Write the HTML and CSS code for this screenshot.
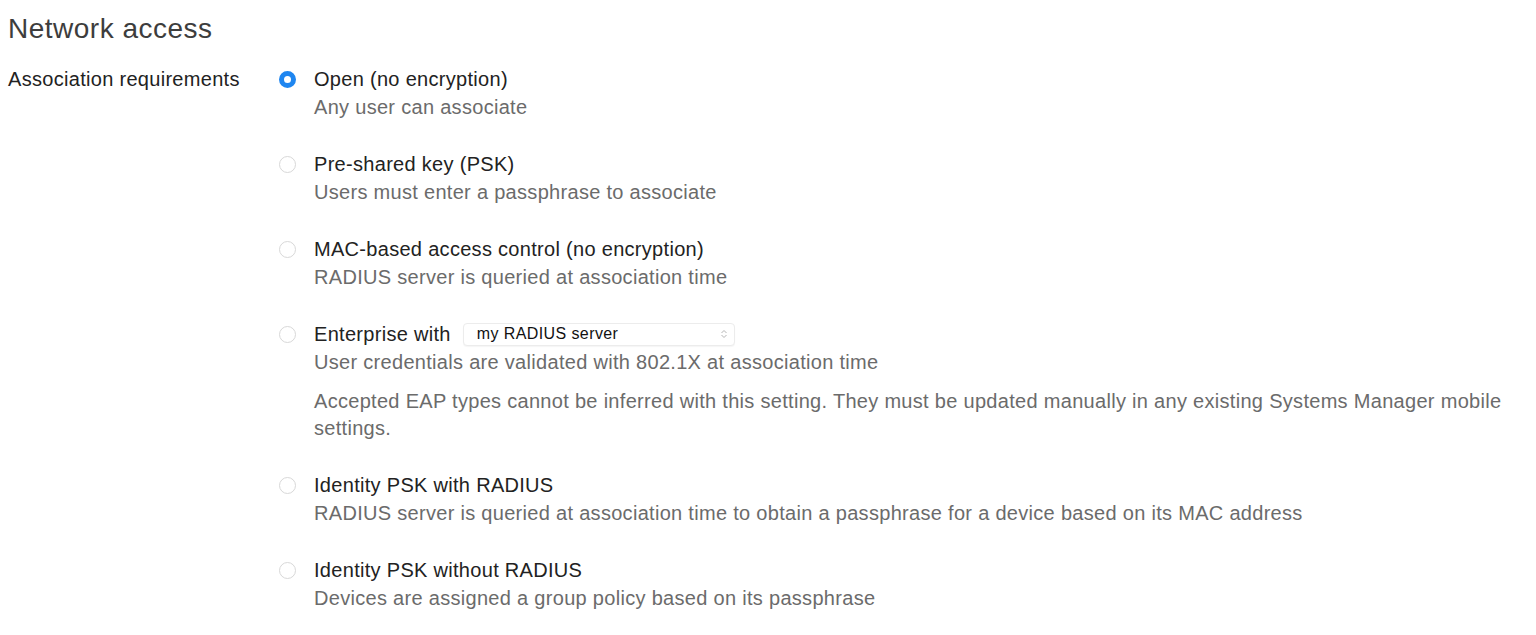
FILE: index.html
```html
<!DOCTYPE html>
<html lang="en">
<head>
<meta charset="utf-8">
<title>Network access</title>
<link rel="stylesheet" href="styles.css">
</head>
<body>
<div class="page">
  <h1 class="title">Network access</h1>
  <div class="field">
    <div class="field-label">Association requirements</div>
    <div class="options">
      <div class="option">
        <span class="radio checked"></span>
        <div class="option-body">
          <div class="option-title">Open (no encryption)</div>
          <div class="option-desc">Any user can associate</div>
        </div>
      </div>
      <div class="option">
        <span class="radio"></span>
        <div class="option-body">
          <div class="option-title">Pre-shared key (PSK)</div>
          <div class="option-desc">Users must enter a passphrase to associate</div>
        </div>
      </div>
      <div class="option">
        <span class="radio"></span>
        <div class="option-body">
          <div class="option-title">MAC-based access control (no encryption)</div>
          <div class="option-desc">RADIUS server is queried at association time</div>
        </div>
      </div>
      <div class="option">
        <span class="radio"></span>
        <div class="option-body">
          <div class="option-title">Enterprise with
            <span class="select">my RADIUS server
              <svg class="select-arrows" width="8" height="10" viewBox="0 0 8 10"><path d="M1.5 4 L4 1.5 L6.5 4 M1.5 6 L4 8.5 L6.5 6" fill="none" stroke="#b5b5b5" stroke-width="1"/></svg>
            </span>
          </div>
          <div class="option-desc">User credentials are validated with 802.1X at association time</div>
          <p class="option-note">Accepted EAP types cannot be inferred with this setting. They must be updated manually in any existing Systems Manager mobile settings.</p>
        </div>
      </div>
      <div class="option">
        <span class="radio"></span>
        <div class="option-body">
          <div class="option-title">Identity PSK with RADIUS</div>
          <div class="option-desc">RADIUS server is queried at association time to obtain a passphrase for a device based on its MAC address</div>
        </div>
      </div>
      <div class="option">
        <span class="radio"></span>
        <div class="option-body">
          <div class="option-title">Identity PSK without RADIUS</div>
          <div class="option-desc">Devices are assigned a group policy based on its passphrase</div>
        </div>
      </div>
    </div>
  </div>
</div>
</body>
</html>
```
FILE: styles.css
```css
html, body {
  margin: 0;
  padding: 0;
  background: #ffffff;
}
body {
  font-family: "Liberation Sans", Arial, sans-serif;
  color: #222;
}
.page {
  padding: 13px 0 0 8px;
}
.title {
  margin: 0 0 20px 0;
  font-size: 28px;
  font-weight: normal;
  letter-spacing: 0.5px;
  color: #3d3d3d;
  line-height: 32px;
}
.field {
  display: flex;
  align-items: flex-start;
}
.field-label {
  width: 271px;
  flex: none;
  font-size: 20px;
  letter-spacing: 0.3px;
  line-height: 28px;
  color: #222;
}
.options {
  display: flex;
  flex-direction: column;
  gap: 29px;
  flex: 1;
  min-width: 0;
}
.option {
  display: flex;
  align-items: flex-start;
}
.radio {
  flex: none;
  width: 17px;
  height: 17px;
  box-sizing: border-box;
  border-radius: 50%;
  border: 1px solid #d8d8d8;
  margin: 6px 18px 0 0;
  background: #fff;
}
.radio.checked {
  border: 5px solid #1f86f0;
  background: #fff;
}
.option-body {
  flex: 1;
  min-width: 0;
}
.option-title {
  font-size: 20px;
  letter-spacing: 0.3px;
  line-height: 28px;
  color: #222;
  display: flex;
  align-items: center;
}
.option-desc {
  font-size: 20px;
  letter-spacing: 0.3px;
  line-height: 28px;
  color: #6b6b6b;
}
.option-note {
  margin: 12px 0 0 0;
  font-size: 20px;
  letter-spacing: 0.3px;
  line-height: 27px;
  color: #6b6b6b;
}
.select {
  display: inline-flex;
  align-items: center;
  justify-content: space-between;
  box-sizing: border-box;
  width: 272px;
  height: 23px;
  margin-left: 12px;
  padding: 0 6px 0 13px;
  border: 1px solid #ececec;
  border-radius: 4px;
  box-shadow: 0 1px 1px rgba(0,0,0,0.04);
  font-size: 16px;
  letter-spacing: 0.4px;
  color: #111;
  background: #fff;
}
.select-arrows {
  flex: none;
}
```
